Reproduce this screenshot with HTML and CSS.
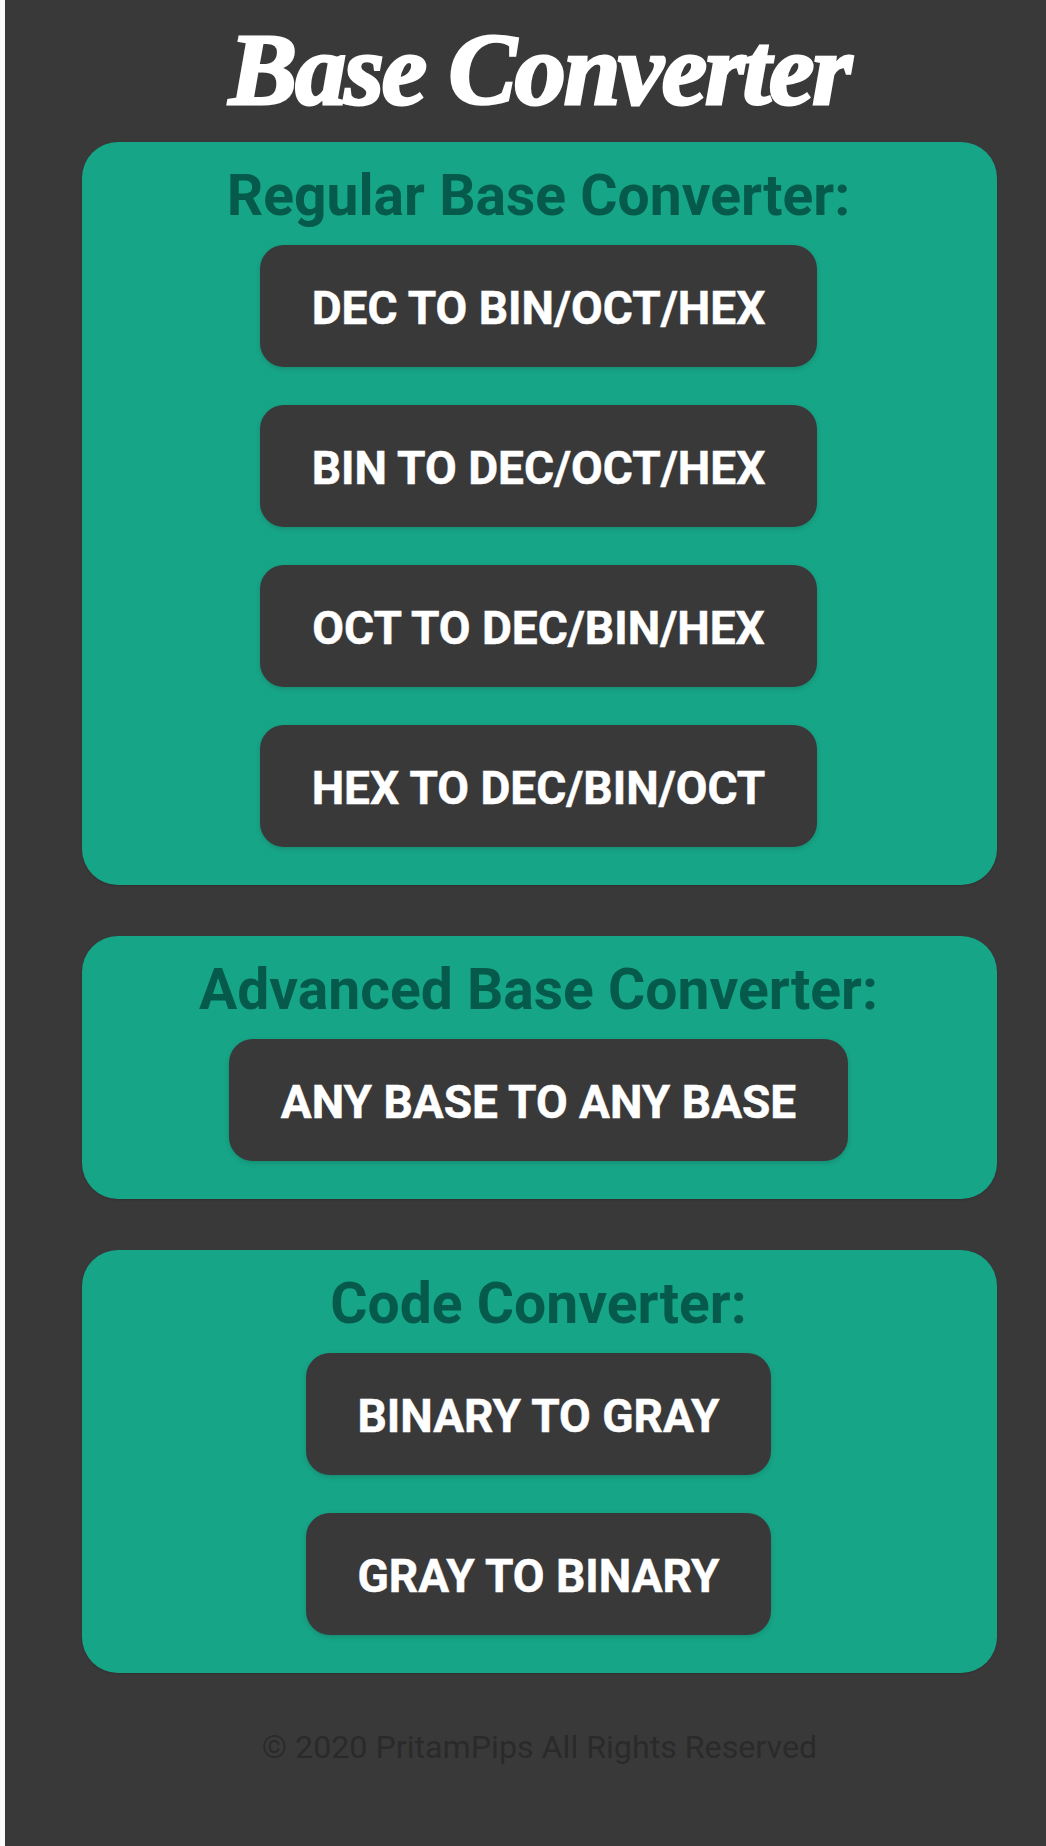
FILE: index.html
```html
<!DOCTYPE html>
<html lang="en">
<head>
    <meta charset="UTF-8">
    <meta name="viewport" content="width=device-width, initial-scale=1.0">
    <title>Base Converter</title>
    <link rel="stylesheet" href="styles.css">
</head>
<body>
    <div class="page">
        <h1 class="title">Base Converter</h1>

        <section class="card">
            <h2 class="card-title">Regular Base Converter:</h2>
            <a class="btn">DEC TO BIN/OCT/HEX</a>
            <a class="btn">BIN TO DEC/OCT/HEX</a>
            <a class="btn">OCT TO DEC/BIN/HEX</a>
            <a class="btn">HEX TO DEC/BIN/OCT</a>
        </section>

        <section class="card">
            <h2 class="card-title">Advanced Base Converter:</h2>
            <a class="btn">ANY BASE TO ANY BASE</a>
        </section>

        <section class="card">
            <h2 class="card-title">Code Converter:</h2>
            <a class="btn">BINARY TO GRAY</a>
            <a class="btn">GRAY TO BINARY</a>
        </section>

        <footer class="footer">© 2020 PritamPips All Rights Reserved</footer>
    </div>
</body>
</html>
```

FILE: styles.css
```css
html, body {
  margin: 0;
  padding: 0;
  background-color: #fbfbfd;
}

.page {
  box-sizing: border-box;
  min-height: 100vh;
  margin-left: 5px;
  padding: 0 49px 0 77px;
  background-color: #3a393a;
  font-family: Roboto, "Liberation Sans", sans-serif;
}

.title {
  height: 142px;
  margin: 0;
  font-family: "Liberation Serif", serif;
  font-size: 102px;
  font-style: italic;
  font-weight: bold;
  line-height: 139px;
  letter-spacing: -2px;
  text-align: center;
  color: #fff;
  -webkit-text-stroke: 3px #fff;
}

.card {
  display: flex;
  flex-direction: column;
  align-items: center;
  gap: 38px;
  margin-bottom: 51px;
  padding: 0 2px 38px 0;
  border-radius: 36px;
  background-color: #17a587;
  box-shadow: 0 1px 2px rgba(0, 0, 0, .15);
}

.card-title {
  height: 103px;
  margin: 0 0 -38px;
  font-size: 57px;
  font-weight: bold;
  line-height: 108px;
  color: #055a4b;
}

.btn {
  padding: 4px 52px 0;
  border-radius: 24px;
  font-size: 46px;
  font-weight: bold;
  line-height: 118px;
  color: #fff;
  background-color: #3a393a;
  box-shadow: 0 2px 5px rgba(0, 0, 0, .15);
  -webkit-text-stroke: .5px #fff;
  cursor: pointer;
}

.footer {
  margin-top: 56px;
  font-size: 32.2px;
  line-height: 36px;
  text-align: center;
  color: #2a2a2a;
}
```
